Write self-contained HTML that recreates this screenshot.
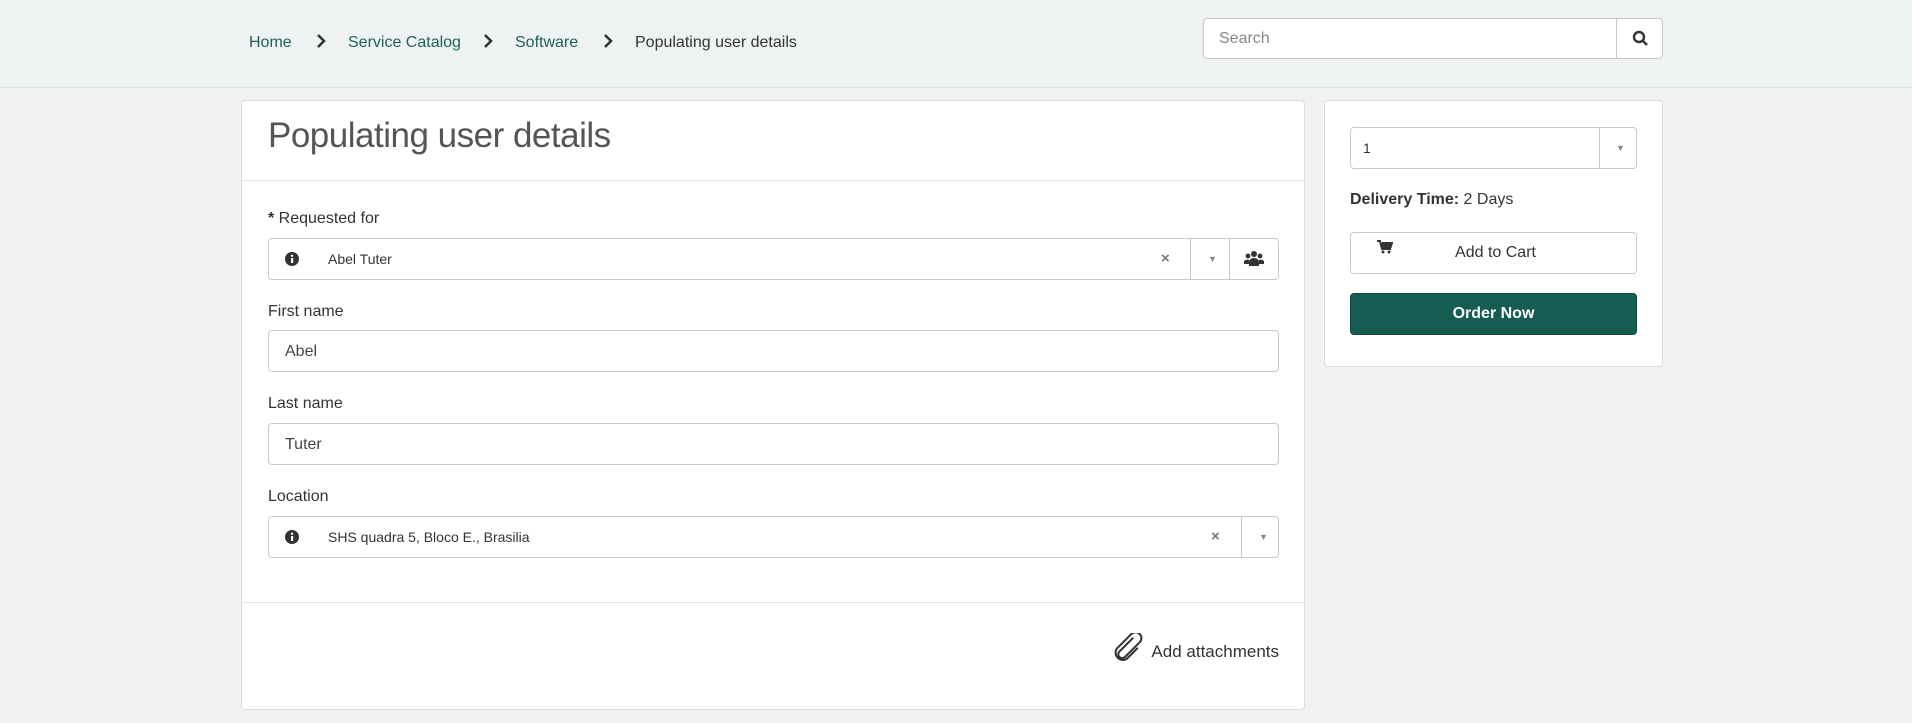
<!DOCTYPE html>
<html><head><meta charset="utf-8"><style>
*{box-sizing:border-box;margin:0;padding:0}
body{width:1912px;height:723px;background:#f1f1f1;font-family:"Liberation Sans",sans-serif;color:#2e2e2e;position:relative;overflow:hidden}
.hdr{position:absolute;left:0;top:0;width:1912px;height:88px;background:#eff2f2;border-bottom:1px solid #dde1e1}
.bc{position:absolute;top:34px;font-size:16px;color:#1f6156}
.chev{position:absolute;top:34px;width:10px;height:14px}
.card{position:absolute;background:#fff;border:1px solid #dcdcdc;border-radius:4px}
.lbl{position:absolute;left:268px;font-size:16px;color:#333}
.inp{position:absolute;left:268px;width:1011px;height:42px;border:1px solid #c8c8c8;border-radius:4px;background:#fff}
.txt{position:absolute;font-size:16px;color:#444}
.small{font-size:14px;color:#333}
.vd{position:absolute;top:0;bottom:0;width:1px;background:#c8c8c8}
.arr{position:absolute;font-size:9px;color:#888}
.x{position:absolute;font-size:15px;color:#777;font-weight:bold}
</style></head><body>
<div class="hdr"></div>
<div class="bc" style="left:249px">Home</div>
<svg class="chev" style="left:316px" viewBox="0 0 10 14"><path d="M2 1l6 6-6 6" stroke="#333" stroke-width="2.6" fill="none"/></svg>
<div class="bc" style="left:348px">Service Catalog</div>
<svg class="chev" style="left:483px" viewBox="0 0 10 14"><path d="M2 1l6 6-6 6" stroke="#333" stroke-width="2.6" fill="none"/></svg>
<div class="bc" style="left:515px">Software</div>
<svg class="chev" style="left:603px" viewBox="0 0 10 14"><path d="M2 1l6 6-6 6" stroke="#333" stroke-width="2.6" fill="none"/></svg>
<div class="bc" style="left:635px;color:#333">Populating user details</div>
<div style="position:absolute;left:1203px;top:18px;width:460px;height:41px;background:#fff;border:1px solid #c8c8c8;border-radius:4px">
<div style="position:absolute;left:15px;top:11px;font-size:16px;color:#888">Search</div>
<div class="vd" style="left:412px"></div>
<svg style="position:absolute;left:428px;top:11px" width="17" height="17" viewBox="0 0 17 17"><circle cx="7" cy="7" r="5" stroke="#333" stroke-width="2.4" fill="none"/><path d="M10.5 10.5l4.5 4.5" stroke="#333" stroke-width="2.6"/></svg>
</div>

<div class="card" style="left:241px;top:100px;width:1064px;height:610px"></div>
<div style="position:absolute;left:242px;top:180px;width:1062px;height:1px;background:#dde3e3"></div>
<div style="position:absolute;left:242px;top:602px;width:1062px;height:1px;background:#dde3e3"></div>
<div style="position:absolute;left:268px;top:116px;font-size:35px;color:#555;letter-spacing:-0.5px">Populating user details</div>

<div class="lbl" style="top:210px"><b>*</b> Requested for</div>
<div class="inp" style="top:238px">
<svg style="position:absolute;left:16px;top:13px" width="14" height="14" viewBox="0 0 14 14"><circle cx="7" cy="7" r="7" fill="#333"/><rect x="6" y="6" width="2.2" height="5" fill="#fff"/><circle cx="7.1" cy="3.8" r="1.2" fill="#fff"/></svg>
<div class="txt small" style="left:59px;top:12px">Abel Tuter</div>
<div class="x" style="left:892px;top:11px">×</div>
<div class="vd" style="left:921px"></div>
<div class="arr" style="left:939px;top:15px">▼</div>
<div class="vd" style="left:960px"></div>
<svg style="position:absolute;left:975px;top:11px" width="20" height="18" viewBox="0 0 20 18"><circle cx="10" cy="4" r="3" fill="#333"/><circle cx="4" cy="6" r="2.4" fill="#333"/><circle cx="16" cy="6" r="2.4" fill="#333"/><path d="M5 16v-4a5 4 0 0 1 10 0v4z" fill="#333"/><path d="M0 14v-3a4 3 0 0 1 5-1v4zM20 14v-3a4 3 0 0 0-5-1v4z" fill="#333"/></svg>
</div>

<div class="lbl" style="top:303px">First name</div>
<div class="inp" style="top:330px"><div class="txt" style="left:16px;top:12px">Abel</div></div>
<div class="lbl" style="top:395px">Last name</div>
<div class="inp" style="top:423px"><div class="txt" style="left:16px;top:12px">Tuter</div></div>
<div class="lbl" style="top:488px">Location</div>
<div class="inp" style="top:516px">
<svg style="position:absolute;left:16px;top:13px" width="14" height="14" viewBox="0 0 14 14"><circle cx="7" cy="7" r="7" fill="#333"/><rect x="6" y="6" width="2.2" height="5" fill="#fff"/><circle cx="7.1" cy="3.8" r="1.2" fill="#fff"/></svg>
<div class="txt small" style="left:59px;top:12px">SHS quadra 5, Bloco E., Brasilia</div>
<div class="x" style="left:942px;top:11px">×</div>
<div class="vd" style="left:972px"></div>
<div class="arr" style="left:990px;top:15px">▼</div>
</div>

<svg style="position:absolute;left:1112px;top:633px" width="34" height="30" viewBox="0 0 34 30"><path d="M22 4 L7 19 a4 4 0 0 0 6 6 L29 9 a6 6 0 0 0-9-9 L4 16 a8 8 0 0 0 11 11 L27 15" stroke="#333" stroke-width="2.2" fill="none" transform="translate(1,1) scale(0.92)"/></svg>
<div style="position:absolute;right:633px;top:642px;font-size:17px;color:#333">Add attachments</div>

<div class="card" style="left:1324px;top:100px;width:339px;height:267px"></div>
<div style="position:absolute;left:1350px;top:127px;width:287px;height:42px;border:1px solid #c8c8c8;border-radius:4px;background:#fff">
<div class="txt small" style="left:12px;top:12px">1</div>
<div class="vd" style="left:248px"></div>
<div class="arr" style="left:265px;top:15px">▼</div>
</div>
<div style="position:absolute;left:1350px;top:191px;font-size:16px;color:#333"><b>Delivery Time:</b> 2 Days</div>
<div style="position:absolute;left:1350px;top:232px;width:287px;height:42px;border:1px solid #c8c8c8;border-radius:4px;background:#fff">
<svg style="position:absolute;left:26px;top:7px" width="16" height="14" viewBox="0 0 16 14"><path d="M0 1h3l2 8h8l2-6H5" stroke="#333" stroke-width="2" fill="#333"/><circle cx="6" cy="12" r="1.5" fill="#333"/><circle cx="12" cy="12" r="1.5" fill="#333"/></svg>
<div style="position:absolute;left:0;right:0;top:11px;text-align:center;font-size:16px;color:#333;padding-left:4px">Add to Cart</div>
</div>
<div style="position:absolute;left:1350px;top:293px;width:287px;height:42px;border-radius:4px;background:#155c52;border:1px solid #0f4a42;color:#fff;font-size:16px;font-weight:bold;text-align:center;line-height:40px">Order Now</div>
</body></html>
